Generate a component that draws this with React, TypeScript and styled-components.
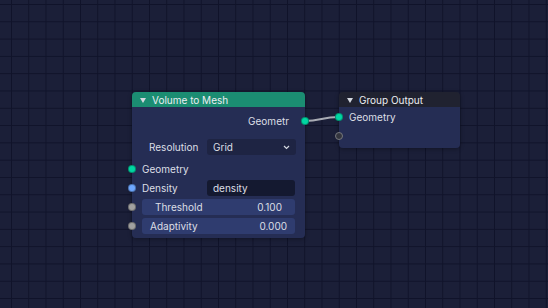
import styled, { createGlobalStyle } from "styled-components";

const GlobalStyle = createGlobalStyle`
  html, body {
    margin: 0;
    padding: 0;
    background: #1b1f38;
  }
  * {
    box-sizing: border-box;
  }
`;

const Canvas = styled.div`
  position: relative;
  width: 548px;
  height: 308px;
  overflow: hidden;
  font-family: Inter, "DejaVu Sans", sans-serif;
  font-size: 10px;
  color: #dcdfe6;
  background-color: #1b1f38;
  background-image:
    linear-gradient(to right, #10132a 1px, transparent 1px),
    linear-gradient(to bottom, #10132a 1px, transparent 1px);
  background-size: 17.25px 17.3px;
  background-position: 11px 4px;
`;

const Link = styled.svg`
  position: absolute;
  left: 0;
  top: 0;
  pointer-events: none;
`;

const Node = styled.div<{ $x: number; $y: number; $w: number }>`
  position: absolute;
  left: ${(p) => p.$x}px;
  top: ${(p) => p.$y}px;
  width: ${(p) => p.$w}px;
  display: flex;
  flex-direction: column;
  border-radius: 4px;
  box-shadow: 0 1px 4px rgba(0, 0, 0, 0.35);
`;

const Header = styled.div<{ $color: string }>`
  height: 15px;
  display: flex;
  align-items: center;
  gap: 6px;
  padding-left: 8px;
  background: ${(p) => p.$color};
  border-radius: 4px 4px 0 0;
  color: #eceef2;
`;

const Caret = styled.span`
  width: 0;
  height: 0;
  border-left: 3px solid transparent;
  border-right: 3px solid transparent;
  border-top: 5px solid #d4d8e0;
  margin-top: 1px;
`;

const Body = styled.div<{ $pt: number; $pb: number }>`
  display: flex;
  flex-direction: column;
  padding: ${(p) => p.$pt}px 0 ${(p) => p.$pb}px;
  background: #252d54;
  border-radius: 0 0 4px 4px;
`;

const Row = styled.div<{ $mt?: number; $align?: string; $pr?: number }>`
  position: relative;
  height: 16px;
  margin-top: ${(p) => p.$mt ?? 0}px;
  display: flex;
  align-items: center;
  justify-content: ${(p) => p.$align ?? "flex-start"};
  padding: 0 ${(p) => p.$pr ?? 10}px 0 10px;
`;

const Socket = styled.span<{ $color: string; $side: "left" | "right"; $hollow?: boolean }>`
  position: absolute;
  top: 50%;
  ${(p) => p.$side}: -4px;
  width: 8px;
  height: 8px;
  margin-top: -4px;
  border-radius: 50%;
  background: ${(p) => (p.$hollow ? "#33353e" : p.$color)};
  border: 1px solid ${(p) => (p.$hollow ? "#76787e" : "rgba(0,0,0,0.3)")};
`;

const Label = styled.span<{ $w?: number; $indent?: number }>`
  flex: 0 0 ${(p) => (p.$w ? `${p.$w}px` : "auto")};
  padding-left: ${(p) => p.$indent ?? 0}px;
  white-space: nowrap;
`;

const OutLabel = styled.span`
  margin-right: 6px;
`;

const Select = styled.div`
  flex: 1;
  height: 16px;
  display: flex;
  align-items: center;
  justify-content: space-between;
  padding: 0 6px;
  background: #1e2443;
  border-radius: 3px;
`;

const TextField = styled.div`
  flex: 1;
  height: 16px;
  display: flex;
  align-items: center;
  padding: 0 6px;
  background: #141930;
  border-radius: 3px;
`;

const Slider = styled.div<{ $inset: number }>`
  flex: 1;
  height: 16px;
  display: flex;
  align-items: center;
  justify-content: space-between;
  padding: 0 ${(p) => p.$inset}px;
  background: #2f3c6f;
  border-radius: 3px;
`;

const Chevron = () => (
  <svg width="7" height="5" viewBox="0 0 7 5">
    <path d="M1 1 L3.5 3.5 L6 1" fill="none" stroke="#d4d8e0" strokeWidth="1.2" />
  </svg>
);

export default function App() {
  return (
    <>
      <GlobalStyle />
      <Canvas>
        <Link width="548" height="308">
          <path d="M304 121 C 322 121, 321 117, 339 117" fill="none" stroke="#a9acb4" strokeWidth="2" />
        </Link>

        <Node $x={132} $y={92} $w={173}>
          <Header $color="#1b8d72">
            <Caret />
            Volume to Mesh
          </Header>
          <Body $pt={6} $pb={4}>
            <Row $align="flex-end">
              <OutLabel>Geometr</OutLabel>
              <Socket $color="#00d6a3" $side="right" />
            </Row>
            <Row $mt={10} $pr={9}>
              <Label $w={65} $indent={7}>Resolution</Label>
              <Select>
                Grid
                <Chevron />
              </Select>
            </Row>
            <Row $mt={6}>
              <Socket $color="#00d6a3" $side="left" />
              <Label>Geometry</Label>
            </Row>
            <Row $mt={3}>
              <Socket $color="#6fa8ff" $side="left" />
              <Label $w={65}>Density</Label>
              <TextField>density</TextField>
            </Row>
            <Row $mt={3}>
              <Socket $color="#a1a1a1" $side="left" />
              <Slider $inset={13}>
                <span>Threshold</span>
                <span>0.100</span>
              </Slider>
            </Row>
            <Row $mt={3}>
              <Socket $color="#a1a1a1" $side="left" />
              <Slider $inset={8}>
                <span>Adaptivity</span>
                <span>0.000</span>
              </Slider>
            </Row>
          </Body>
        </Node>

        <Node $x={339} $y={92} $w={121}>
          <Header $color="#202230">
            <Caret />
            Group Output
          </Header>
          <Body $pt={2} $pb={4}>
            <Row>
              <Socket $color="#00d6a3" $side="left" />
              <Label>Geometry</Label>
            </Row>
            <Row $mt={3}>
              <Socket $color="#00d6a3" $side="left" $hollow />
            </Row>
          </Body>
        </Node>
      </Canvas>
    </>
  );
}
